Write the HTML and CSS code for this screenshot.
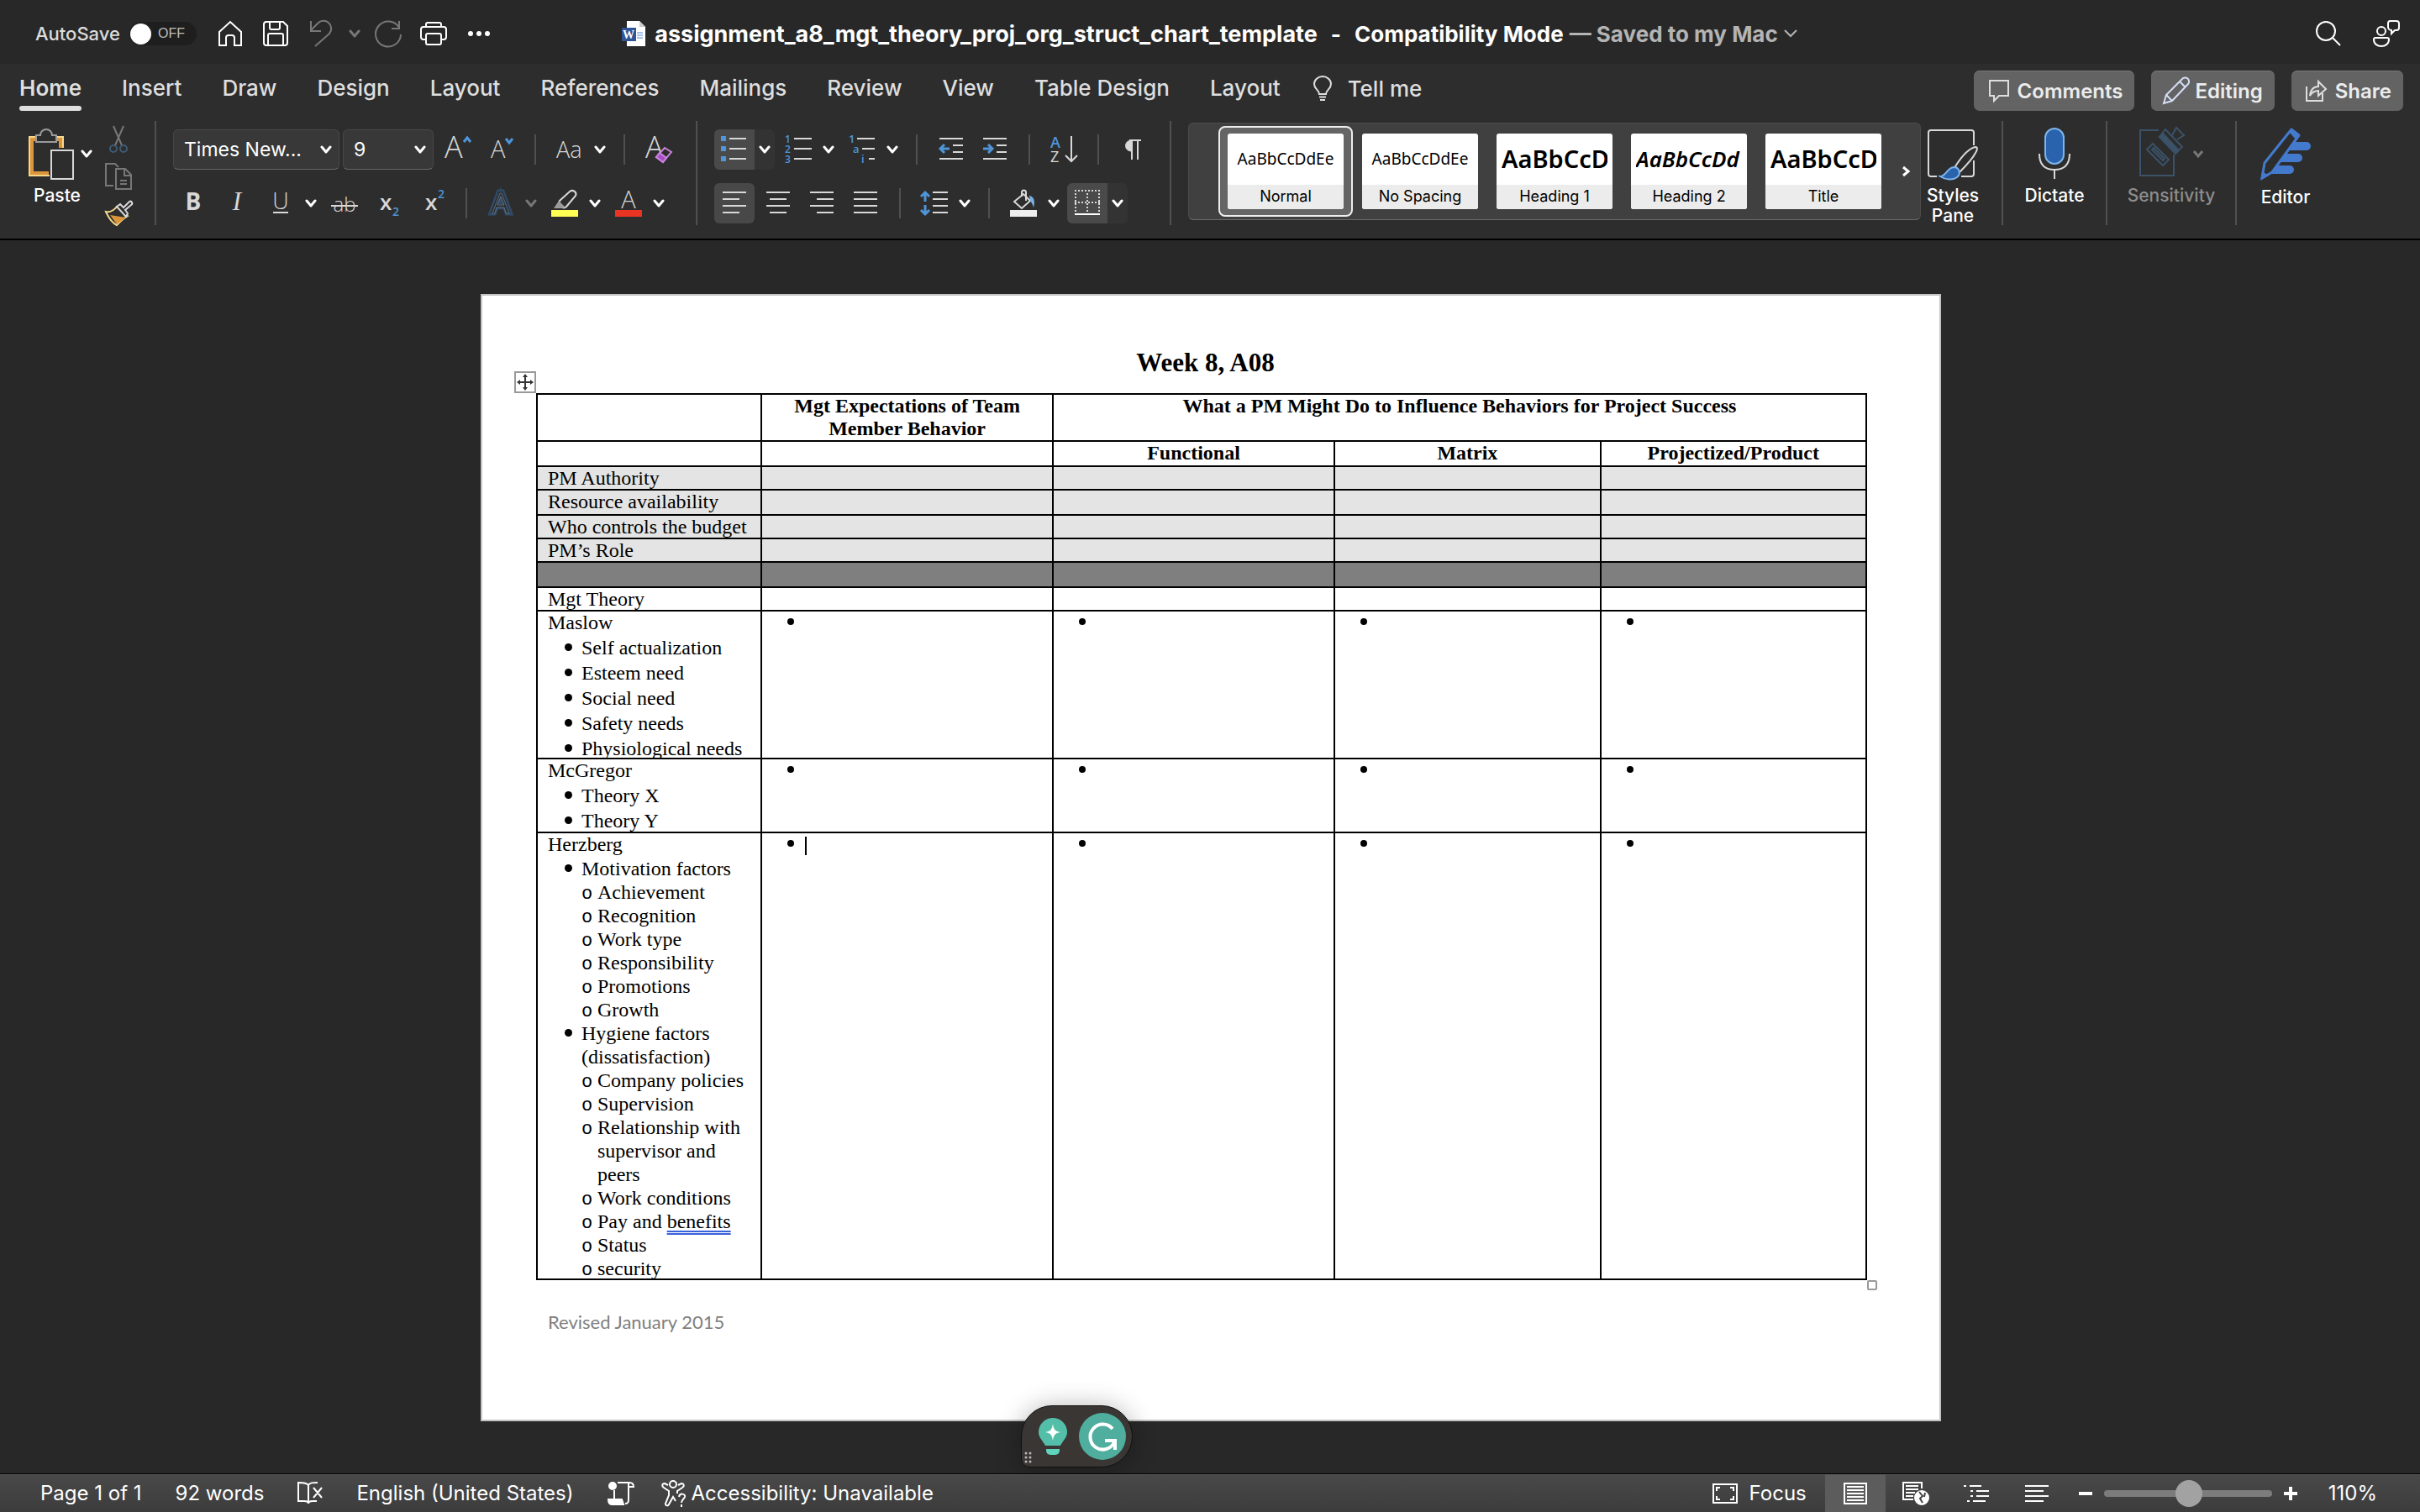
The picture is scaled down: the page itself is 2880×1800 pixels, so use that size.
FILE: index.html
```html
<!DOCTYPE html>
<html lang="en">
<head>
<meta charset="utf-8">
<meta name="viewport" content="width=device-width, initial-scale=1">
<title>assignment_a8_mgt_theory_proj_org_struct_chart_template</title>
<link rel="stylesheet" href="styles.css">
</head>
<body>
<svg class="sprite" aria-hidden="true">
  <symbol id="chev" viewBox="0 0 14 10"><path d="M2 2l5 6 5-6" fill="none" stroke="currentColor" stroke-width="3" stroke-linecap="round" stroke-linejoin="round"/></symbol>
</svg>

<header class="titlebar">
  <div class="quick">
    <label class="autosave" for="autosave">AutoSave</label>
    <input class="toggle" type="checkbox" id="autosave">
    <button class="quick-btn" aria-label="Home"><svg width="28" height="30" viewBox="0 0 28 30"><path d="M1 13L14 1l13 12v16h-8V20a3 3 0 0 0-3-3h-4a3 3 0 0 0-3 3v9H1z"/></svg></button>
    <button class="quick-btn" aria-label="Save"><svg width="30" height="30" viewBox="0 0 30 30"><path d="M4 1h20l5 5v20a3 3 0 0 1-3 3H4a3 3 0 0 1-3-3V4a3 3 0 0 1 3-3zM8 1v7a2 2 0 0 0 2 2h8a2 2 0 0 0 2-2V1M6 29V17a2 2 0 0 1 2-2h14a2 2 0 0 1 2 2v12"/></svg></button>
    <button class="quick-btn dim" aria-label="Undo"><svg width="28" height="32" viewBox="0 0 28 32"><path d="M2 1v12h12M2 12l8-8a9 9 0 0 1 14 12L7 31"/></svg></button>
    <button class="quick-chev dim" aria-label="Undo history"><svg width="14" height="10"><use href="#chev"/></svg></button>
    <button class="quick-btn dim" aria-label="Redo"><svg width="32" height="32" viewBox="0 0 32 32"><path d="M29 1v9h-9M29 9a15 15 0 1 0 2 8"/></svg></button>
    <button class="quick-btn" aria-label="Print"><svg width="32" height="28" viewBox="0 0 32 28"><path d="M7 6V3a2 2 0 0 1 2-2h14a2 2 0 0 1 2 2v3M7 21H4a3 3 0 0 1-3-3V9a3 3 0 0 1 3-3h24a3 3 0 0 1 3 3v9a3 3 0 0 1-3 3h-3M9 14h14a2 2 0 0 1 2 2v9a2 2 0 0 1-2 2H9a2 2 0 0 1-2-2v-9a2 2 0 0 1 2-2z"/></svg></button>
    <button class="quick-btn" aria-label="More"><svg width="26" height="6" viewBox="0 0 26 6"><g class="solid"><circle cx="3" cy="3" r="3"/><circle cx="13" cy="3" r="3"/><circle cx="23" cy="3" r="3"/></g></svg></button>
  </div>
  <div class="doc-title">
    <svg width="28" height="30" viewBox="0 0 28 30" aria-hidden="true"><path d="M6 0h15l7 7v23H6z" fill="#fff"/><path d="M21 0v7h7z" fill="#ccc"/><path d="M18 14h7M18 17h7M18 20h7" stroke="#4a86d8" stroke-width="1"/><rect y="8" width="17" height="16" fill="#2f5597"/><text x="8" y="21" font-family="Liberation Serif, serif" font-size="14" font-weight="700" text-anchor="middle" fill="#fff">W</text></svg>
    <span class="file">assignment_a8_mgt_theory_proj_org_struct_chart_template</span>
    <span class="sep">-</span>
    <span>Compatibility Mode</span>
    <button class="saved">— Saved to my Mac<svg width="18" height="10" viewBox="0 0 18 10"><path d="M2 1l7 7 7-7" fill="none" stroke="currentColor" stroke-width="2"/></svg></button>
  </div>
  <div class="title-tools">
    <button class="quick-btn" aria-label="Search"><svg width="30" height="30" viewBox="0 0 30 30"><circle cx="12" cy="12" r="11"/><path d="M20 20l9 9"/></svg></button>
    <button class="quick-btn" aria-label="Share with people"><svg width="32" height="32" viewBox="0 0 32 32"><circle cx="10" cy="13" r="5"/><path d="M3 21h14a2 2 0 0 1 2 2c0 5-4 8-9 8s-9-3-9-8a2 2 0 0 1 2-2zM20 1h8a3 3 0 0 1 3 3v5a3 3 0 0 1-3 3h-2l-4 4v-4a4 4 0 0 1-4-4V4a3 3 0 0 1 2-3z"/></svg></button>
  </div>
</header>

<div class="ribbon">
  <div class="tabrow">
    <nav class="tabs">
      <a class="tab active" href="#home">Home</a>
      <a class="tab" href="#insert">Insert</a>
      <a class="tab" href="#draw">Draw</a>
      <a class="tab" href="#design">Design</a>
      <a class="tab" href="#layout">Layout</a>
      <a class="tab" href="#references">References</a>
      <a class="tab" href="#mailings">Mailings</a>
      <a class="tab" href="#review">Review</a>
      <a class="tab" href="#view">View</a>
      <a class="tab" href="#table-design">Table Design</a>
      <a class="tab" href="#table-layout">Layout</a>
    </nav>
    <button class="tellme"><svg width="22" height="30" viewBox="0 0 22 30" fill="none" stroke="currentColor" stroke-width="2"><path d="M7 22c0-5-6-6-6-12a10 9 0 0 1 20 0c0 6-6 7-6 12zM7 25.500h8"/><path d="M8 29h6"/></svg>Tell me</button>
    <div class="actions">
      <button class="action"><svg width="32" height="32" viewBox="0 0 32 32"><path d="M5 4h22v18H16l-6 6v-6H5z"/></svg>Comments</button>
      <button class="action"><svg class="pencil" width="32" height="32" viewBox="0 0 32 32"><path d="M1 31l3-10L23 2a4 4 0 0 1 7 6L11 28zM20 5l7 7M4 21l7 7"/></svg>Editing</button>
      <button class="action"><svg width="32" height="32" viewBox="0 0 32 32"><path d="M4 11v17h19v-9M8 22c1-8 5-11 10-11V5l9 9-9 8v-6c-4 0-7 1-10 6z"/></svg>Share</button>
    </div>
  </div>

  <div class="groups">
    <div class="group clipboard">
      <div class="paste">
        <button class="paste-btn"><svg width="54" height="60" viewBox="0 0 54 60" fill="none"><path d="M25 55H1V9h40v13" stroke="#f6d88d" stroke-width="2"/><path d="M24 52H4V12h34v10" stroke="#db963c" stroke-width="4"/><path d="M9 15V7h5a7 7 0 0 1 14 0h5v8z" fill="#2d2d2d" stroke="#9b9b9b" stroke-width="2"/><path d="M27 25h26v34H27z" fill="#2d2d2d" stroke="#d8d8d8" stroke-width="2"/></svg>Paste</button>
        <button class="paste-chev" aria-label="Paste options"><svg width="14" height="10"><use href="#chev"/></svg></button>
      </div>
      <div class="clip-tools">
        <button aria-label="Cut"><svg width="32" height="32" viewBox="0 0 32 32" fill="none" stroke-width="2"><path d="M10 0l10 23M22 0L12 23" stroke="#777"/><circle cx="10" cy="27" r="4" stroke="#3f5a73"/><circle cx="22" cy="27" r="4" stroke="#3f5a73"/></svg></button>
        <button aria-label="Copy"><svg width="32" height="32" viewBox="0 0 32 32" fill="none" stroke="#777" stroke-width="2"><path d="M10 27H1V1h11l4 4M13 7h11l7 7v17H13zM23 7v8h8M18 21h8M18 25h8"/></svg></button>
        <button aria-label="Format Painter"><svg width="32" height="32" viewBox="0 0 32 32" fill="none" stroke-width="2"><path d="M1 14c6 1 10-2 13-6l13 11c-5 3-9 7-13 11C8 27 4 21 1 14z" stroke="#f6d88d"/><path d="M6 18l19 3-11 8z" fill="#db963c"/><path d="M14 8l4-3 4 4 7-7a2 2 0 0 1 2 4l-7 6 3 4-2 4z" fill="#2d2d2d" stroke="#d8d8d8"/></svg></button>
      </div>
    </div>

    <div class="group rows">
      <div class="row">
        <label class="combo font"><select aria-label="Font"><option>Times New...</option></select><svg width="14" height="10"><use href="#chev"/></svg></label>
        <label class="combo size"><select aria-label="Font size"><option>9</option></select><svg width="14" height="10"><use href="#chev"/></svg></label>
        <button class="ib" aria-label="Grow font"><svg viewBox="0 0 32 32"><text class="lt" x="1" y="26" font-size="36">A</text><path class="b" d="M24 7l4-5 4 5"/></svg></button>
        <button class="ib" aria-label="Shrink font"><svg viewBox="0 0 32 32"><text class="lt" x="4" y="26" font-size="29">A</text><path class="b" d="M22 3l4 5 4-5"/></svg></button>
        <span class="div"></span>
        <button class="ib" aria-label="Change case"><svg viewBox="0 0 32 32"><text class="lt" x="0" y="26" font-size="27">Aa</text></svg></button>
        <button class="ic" aria-label="Case options"><svg width="14" height="10"><use href="#chev"/></svg></button>
        <span class="div"></span>
        <button class="ib" aria-label="Clear formatting"><svg viewBox="0 0 32 32"><text class="lt" x="0" y="26" font-size="36">A</text><path d="M13 25L23 14l8 5-10 12z" fill="#2d2d2d" stroke="#c884dc" stroke-width="2"/><path d="M13 25l4-5 8 6-4 5z" fill="#a54fc0" stroke="#c884dc" stroke-width="2"/></svg></button>
      </div>
      <div class="row">
        <button class="ib" aria-label="Bold"><svg viewBox="0 0 32 32"><text class="bd" x="16" y="24" font-size="28" text-anchor="middle">B</text></svg></button>
        <button class="ib" aria-label="Italic"><svg viewBox="0 0 32 32"><text class="it" x="16" y="24" font-size="31" text-anchor="middle">I</text></svg></button>
        <button class="ib" aria-label="Underline"><svg viewBox="0 0 32 32"><text class="lt" x="16" y="23" font-size="27" text-anchor="middle">U</text><path class="l" d="M7 27h18"/></svg></button>
        <button class="ic" aria-label="Underline options"><svg width="14" height="10"><use href="#chev"/></svg></button>
        <button class="ib" aria-label="Strikethrough"><svg viewBox="0 0 32 32"><text class="lt" x="16" y="26" font-size="24" text-anchor="middle">ab</text><path class="l" d="M0 19h32"/></svg></button>
        <button class="ib" aria-label="Subscript"><svg viewBox="0 0 32 32"><text class="sb" x="6" y="24" font-size="26">x</text><text class="bl" x="21" y="31" font-size="14">2</text></svg></button>
        <button class="ib" aria-label="Superscript"><svg viewBox="0 0 32 32"><text class="sb" x="8" y="24" font-size="26">x</text><text class="bl" x="23" y="10" font-size="14">2</text></svg></button>
        <span class="div"></span>
        <button class="ib" aria-label="Text effects"><svg viewBox="0 0 32 32"><text x="16" y="28" font-size="36" text-anchor="middle" font-family="Open Sans, sans-serif" font-weight="600" fill="#2d2d2d" stroke="#2f4b68" stroke-width="5" paint-order="stroke">A</text><path d="M6 28L15 4h2l9 24h-4l-2-7h-9l-2 7zM12 18h8l-4-10z" fill="none" stroke="#5b7186" stroke-width="1"/></svg></button>
        <button class="ic dim" aria-label="Text effect options"><svg width="14" height="10"><use href="#chev"/></svg></button>
        <button class="ib" aria-label="Highlight"><svg viewBox="0 0 32 32"><path d="M10 13L22 2c4-3 9 1 7 5L18 20c-2 2-4 2-6 0s-4-4-2-7z" fill="none" stroke="#d8d8d8" stroke-width="2"/><path d="M9 13l8 8-5 1H3z" fill="#9b9b9b"/><path d="M0 24h32v8H0z" fill="#ffff54"/></svg></button>
        <button class="ic" aria-label="Highlight options"><svg width="14" height="10"><use href="#chev"/></svg></button>
        <button class="ib" aria-label="Font colour"><svg viewBox="0 0 32 32"><text class="lt" x="16" y="22" font-size="29" text-anchor="middle">A</text><path d="M0 24h32v8H0z" fill="#e93423"/></svg></button>
        <button class="ic" aria-label="Font colour options"><svg width="14" height="10"><use href="#chev"/></svg></button>
      </div>
    </div>

    <div class="group rows">
      <div class="row">
        <div class="split">
          <button class="ib" aria-label="Bullets"><svg viewBox="0 0 32 32"><path class="l" d="M10 3h20M10 15h20M10 27h20"/><path d="M0 0h6v6H0zM0 12h6v6H0zM0 24h6v6H0z" fill="#4e95d9"/></svg></button><button class="ic" aria-label="Bullet options"><svg width="14" height="10"><use href="#chev"/></svg></button>
        </div>
        <div class="plain">
          <button class="ib" aria-label="Numbering"><svg viewBox="0 0 32 32"><path class="l" d="M11 3h21M11 15h21M11 27h21"/><g class="bl" font-size="12"><text x="0" y="8">1</text><text x="0" y="20">2</text><text x="0" y="32">3</text></g></svg></button><button class="ic" aria-label="Numbering options"><svg width="14" height="10"><use href="#chev"/></svg></button>
        </div>
        <div class="plain">
          <button class="ib" aria-label="Multilevel list"><svg viewBox="0 0 32 32"><path class="l" d="M10 3h21M16 15h15M24 27h7"/><g class="bl" font-size="13"><text x="0" y="8">1</text><text x="5" y="20">a</text><text x="15" y="32">i</text></g></svg></button><button class="ic" aria-label="Multilevel options"><svg width="14" height="10"><use href="#chev"/></svg></button>
        </div>
        <span class="div"></span>
        <button class="ib" aria-label="Decrease indent"><svg viewBox="0 0 32 32"><path class="l" d="M2 3h28M18 11h12M18 19h12M2 27h28"/><path class="b" d="M14 15H3m5-5l-5 5 5 5"/></svg></button>
        <button class="ib" aria-label="Increase indent"><svg viewBox="0 0 32 32"><path class="l" d="M2 3h28M18 11h12M18 19h12M2 27h28"/><path class="b" d="M2 15h11m-5-5l5 5-5 5"/></svg></button>
        <span class="div"></span>
        <button class="ib" aria-label="Sort"><svg viewBox="0 0 32 32"><text class="bl" x="0" y="14" font-size="18">A</text><text class="md" x="0" y="31" font-size="18">Z</text><path class="l" d="M25 0v30m-7-7l7 7 7-7"/></svg></button>
        <span class="div"></span>
        <button class="ib" aria-label="Show paragraph marks"><svg viewBox="0 0 32 32"><path d="M14 5v13a6 6 0 0 1 0-13z" fill="#d8d8d8" stroke="#d8d8d8"/><path class="l" d="M12 5h14M15 5v23M22 5v23"/></svg></button>
      </div>
      <div class="row">
        <button class="ib on" aria-label="Align left"><svg viewBox="0 0 32 32"><path class="l" d="M2 3h28M2 11h20M2 19h28M2 27h20"/></svg></button>
        <button class="ib" aria-label="Center"><svg viewBox="0 0 32 32"><path class="l" d="M2 3h28M6 11h20M2 19h28M6 27h20"/></svg></button>
        <button class="ib" aria-label="Align right"><svg viewBox="0 0 32 32"><path class="l" d="M2 3h28M10 11h20M2 19h28M10 27h20"/></svg></button>
        <button class="ib" aria-label="Justify"><svg viewBox="0 0 32 32"><path class="l" d="M2 3h28M2 11h28M2 19h28M2 27h28"/></svg></button>
        <span class="div"></span>
        <div class="plain">
          <button class="ib" aria-label="Line spacing"><svg viewBox="0 0 32 32"><path class="l" d="M14 3h18M14 11h18M14 19h18M14 27h18"/><path class="b" d="M5 14V3M0 8l5-5 5 5M5 18v11M0 24l5 5 5-5"/></svg></button><button class="ic" aria-label="Line spacing options"><svg width="14" height="10"><use href="#chev"/></svg></button>
        </div>
        <span class="div"></span>
        <div class="plain">
          <button class="ib" aria-label="Shading"><svg viewBox="0 0 32 32"><path class="l" d="M5 14L16 5l8 8-10 9zM14 8V3a2 2 0 0 1 5 0v10"/><path d="M23 7c6 1 7 7 5 14-1-3-2-6-4-8z" fill="#79b0e6"/><path d="M0 24h32v8H0z" fill="#eee"/></svg></button><button class="ic" aria-label="Shading options"><svg width="14" height="10"><use href="#chev"/></svg></button>
        </div>
        <div class="split">
          <button class="ib" aria-label="Borders"><svg viewBox="0 0 32 32"><path d="M1 1h30M1 15h30M2 4v22M16 4v22M30 4v22" fill="none" stroke="#d8d8d8" stroke-width="2" stroke-dasharray="2 2"/><path d="M1 29h30" stroke="#fff" stroke-width="2"/></svg></button><button class="ic" aria-label="Border options"><svg width="14" height="10"><use href="#chev"/></svg></button>
        </div>
      </div>
    </div>

    <div class="group styles-group">
      <div class="gallery">
        <button class="tile selected"><span class="card"><span class="sample">AaBbCcDdEe</span><span class="name">Normal</span></span></button>
        <button class="tile"><span class="card"><span class="sample">AaBbCcDdEe</span><span class="name">No Spacing</span></span></button>
        <button class="tile"><span class="card"><span class="sample big">AaBbCcD</span><span class="name">Heading 1</span></span></button>
        <button class="tile"><span class="card"><span class="sample big slant">AaBbCcDd</span><span class="name">Heading 2</span></span></button>
        <button class="tile"><span class="card"><span class="sample big">AaBbCcD</span><span class="name">Title</span></span></button>
        <button class="gallery-next" aria-label="More styles"><svg width="10" height="14" viewBox="0 0 10 14"><path d="M2 2l6 5-6 5" fill="none" stroke="currentColor" stroke-width="3"/></svg></button>
      </div>
      <button class="large pane"><svg width="60" height="60" viewBox="0 0 60 60" fill="none" stroke-width="2"><path d="M11 56H4a3 3 0 0 1-3-3V4a3 3 0 0 1 3-3h48a3 3 0 0 1 3 3v15M55 37v16a3 3 0 0 1-3 3H40" stroke="#d8d8d8"/><path d="M33 44C42 30 51 22 57 21c3 0 2 4 0 7-4 8-11 15-19 23z" stroke="#d8d8d8"/><path d="M15 56c7 0 8-10 16-11 7 0 9 8 4 12-5 4-14 3-20-1z" fill="#2a63ad" stroke="#7db4ea"/></svg>Styles Pane</button>
    </div>

    <div class="group">
      <button class="large dictate"><svg width="60" height="60" viewBox="0 0 60 60" fill="none" stroke-width="2"><rect x="19" y="-1" width="22" height="42" rx="11" fill="#2a63ad" stroke="#7db4ea"/><path d="M12 29c0 13 6 19 18 19s18-6 18-19M30 48v11" stroke="#d8d8d8"/></svg>Dictate</button>
    </div>
    <div class="group">
      <button class="large sensitivity"><svg width="76" height="60" viewBox="0 0 76 60" fill="none" stroke="#3b5268" stroke-width="2"><path d="M23 1H1v54h40V30"/><path d="M9 24l7-7 19 19-7 7zM15 24l13 13 2-2-13-13z"/><path d="M24 9l7-9 20 21-8 7z"/><path d="M24 9l4-4 19 20-4 4z" fill="#3b5268"/><path d="M39 7l5-9 9 9-8 5"/><path d="M65 26l5 6 5-6" stroke="#777" stroke-width="3"/></svg>Sensitivity</button>
    </div>
    <div class="group last">
      <button class="large editor"><svg width="62" height="62" viewBox="0 0 62 62"><path d="M36 15h20a5 5 0 0 1 0 10H30zM28 29h18a5 5 0 0 1 0 10H22zM19 43h17a5 5 0 0 1 0 10H14z" fill="#447ace"/><path d="M38 0l9 7-32 44-12 7 3-18z" fill="#2d2d2d" stroke="#447ace" stroke-width="3" stroke-linejoin="round"/><path d="M36 4l2-5 10 8-4 6z" fill="#447ace"/><path d="M1 61l2-11 8 5z" fill="#447ace"/></svg>Editor</button>
    </div>
  </div>
</div>

<main class="workspace">
  <article class="page">
    <h1>Week 8, A08</h1>
    <div class="table-wrap">
      <button class="move-handle" aria-label="Move table"><svg width="20" height="20" viewBox="0 0 20 20"><path d="M10 2v16M2 10h16" stroke="#333" stroke-width="2"/><path d="M10 0l3 4H7zM10 20l3-4H7zM0 10l4-3v6zM20 10l-4-3v6z" fill="#333"/></svg></button>
      <table>
        <colgroup><col class="c1"><col class="c2"><col class="c3"><col class="c4"><col class="c4"></colgroup>
        <thead>
          <tr><th></th><th>Mgt Expectations of Team Member Behavior</th><th colspan="3">What a PM Might Do to Influence Behaviors for Project Success</th></tr>
          <tr class="tall"><th></th><th></th><th>Functional</th><th>Matrix</th><th>Projectized/Product</th></tr>
        </thead>
        <tbody>
          <tr class="shade"><td>PM Authority</td><td></td><td></td><td></td><td></td></tr>
          <tr class="shade tall"><td>Resource availability</td><td></td><td></td><td></td><td></td></tr>
          <tr class="shade"><td>Who controls the budget</td><td></td><td></td><td></td><td></td></tr>
          <tr class="shade"><td>PM’s Role</td><td></td><td></td><td></td><td></td></tr>
          <tr class="band tall"><td></td><td></td><td></td><td></td><td></td></tr>
          <tr><td>Mgt Theory</td><td></td><td></td><td></td><td></td></tr>
          <tr>
            <td>Maslow
              <ul class="points roomy snug"><li>Self actualization</li><li>Esteem need</li><li>Social need</li><li>Safety needs</li><li>Physiological needs</li></ul></td>
            <td><ul class="entry"><li></li></ul></td><td><ul class="entry"><li></li></ul></td><td><ul class="entry"><li></li></ul></td><td><ul class="entry"><li></li></ul></td>
          </tr>
          <tr>
            <td>McGregor
              <ul class="points roomy"><li>Theory X</li><li>Theory Y</li></ul></td>
            <td><ul class="entry"><li></li></ul></td><td><ul class="entry"><li></li></ul></td><td><ul class="entry"><li></li></ul></td><td><ul class="entry"><li></li></ul></td>
          </tr>
          <tr>
            <td>Herzberg
              <ul class="points">
                <li>Motivation factors
                  <ul class="sub"><li>Achievement</li><li>Recognition</li><li>Work type</li><li>Responsibility</li><li>Promotions</li><li>Growth</li></ul></li>
                <li>Hygiene factors (dissatisfaction)
                  <ul class="sub"><li>Company policies</li><li>Supervision</li><li>Relationship with supervisor and peers</li><li>Work conditions</li><li>Pay and <span class="flag">benefits</span></li><li>Status</li><li>security</li></ul></li>
              </ul></td>
            <td><ul class="entry"><li><span class="caret"></span></li></ul></td><td><ul class="entry"><li></li></ul></td><td><ul class="entry"><li></li></ul></td><td><ul class="entry"><li></li></ul></td>
          </tr>
        </tbody>
      </table>
      <span class="resize-handle"></span>
    </div>
    <footer class="page-footer">Revised January 2015</footer>
  </article>
</main>

<aside class="assistant">
  <svg class="grip" width="10" height="14" viewBox="0 0 10 14" fill="#bbb"><circle cx="2" cy="2" r="1.500"/><circle cx="7" cy="2" r="1.500"/><circle cx="2" cy="7" r="1.500"/><circle cx="7" cy="7" r="1.500"/><circle cx="2" cy="12" r="1.500"/><circle cx="7" cy="12" r="1.500"/></svg>
  <button aria-label="Suggestions"><svg width="34" height="44" viewBox="0 0 34 44"><path d="M17 0a17 17 0 0 1 17 17c0 7-6 11-8 16H8C6 28 0 24 0 17A17 17 0 0 1 17 0z" fill="#54bfa9"/><path d="M9 37h16v2a5 5 0 0 1-5 5h-6a5 5 0 0 1-5-5z" fill="#5fd3bc"/><path d="M17 7c1 7 3 9 9 10-6 1-8 3-9 10-1-7-3-9-9-10 6-1 8-3 9-10z" fill="#fff"/></svg></button>
  <button aria-label="Writing assistant"><svg width="56" height="56" viewBox="0 0 56 56"><circle cx="28" cy="28" r="28" fill="#50ae9f"/><path d="M40 19a15 15 0 1 0 2 16M31 33h12v11" fill="none" stroke="#fff" stroke-width="4"/></svg></button>
</aside>

<footer class="status">
  <div class="status-left">
    <span>Page 1 of 1</span>
    <span>92 words</span>
    <button aria-label="Proofing"><svg width="30" height="28" viewBox="0 0 30 28"><path d="M13 4c-2-3-7-3-12-3v22h7c3 0 5 1 5 3 0-2 2-3 5-3h5M13 4v22M13 4c2-3 5-3 11-3M19 7l10 12M29 7L19 19"/></svg></button>
    <button>English (United States)</button>
    <div class="status-pair">
      <button aria-label="Track changes"><svg width="32" height="28" viewBox="0 0 32 28"><path d="M12 1h14c4 0 5 2 5 5h-5M25 2v19c0 4-1 5-4 5M8 10v12"/><g class="solid"><circle cx="6" cy="5" r="4"/><path d="M1 21h16l2 6H5c-3 0-4-3-4-6z"/></g></svg></button>
      <button class="access"><svg width="30" height="32" viewBox="0 0 30 32"><circle cx="14" cy="5" r="4"/><path d="M8 6L4 4C1 4 0 7 3 9l6 4v5L5 28c0 3 3 3 4 1l5-9 3 5M20 6l4-2c3 0 4 3 1 5l-6 4v3M21 20c1-5 8-4 7 0-1 3-4 3-4 7M24 29v3"/></svg>Accessibility: Unavailable</button>
    </div>
  </div>
  <div class="status-right">
    <button class="focus"><svg width="30" height="24" viewBox="0 0 30 24"><path d="M1 1h28v22H1zM5 9V5h4M21 5h4v4M25 15v4h-4M9 19H5v-4"/></svg>Focus</button>
    <button class="view active" aria-label="Print layout"><svg width="28" height="26" viewBox="0 0 28 26"><path d="M1 1h26v24H1zM4 5h20M4 9h20M4 13h20M4 17h20M4 21h20"/></svg></button>
    <button class="view" aria-label="Web layout"><svg width="32" height="28" viewBox="0 0 32 28"><path d="M13 21H1V1h22v7M4 5h15M4 9h15M4 13h11M4 17h9"/><g class="solid"><circle cx="23" cy="19" r="8"/></g><path d="M20 12l4 5-3 3 3 5M27 13l-1 5" class="land"/></svg></button>
    <button class="view" aria-label="Outline"><svg width="32" height="24" viewBox="0 0 32 24"><path d="M1 3h3M8 3h14M9 9h3M16 9h15M9 15h3M16 15h15M5 21h3M12 21h15"/></svg></button>
    <button class="view" aria-label="Draft"><svg width="28" height="24" viewBox="0 0 28 24"><path d="M0 3h28M0 9h22M0 15h28M0 21h22"/></svg></button>
    <div class="zoom">
      <button aria-label="Zoom out"><svg width="16" height="16" viewBox="0 0 16 16"><path d="M0 8h16"/></svg></button>
      <input type="range" min="0" max="100" value="51" aria-label="Zoom">
      <button aria-label="Zoom in"><svg width="16" height="16" viewBox="0 0 16 16"><path d="M0 8h16M8 0v16"/></svg></button>
    </div>
    <span class="percent">110%</span>
  </div>
</footer>
</body>
</html>
```
FILE: styles.css
```css
* { box-sizing: border-box; }

body {
  margin: 0;
  min-height: 100vh;
  display: flex;
  flex-direction: column;
  background: #282828;
  color: #fff;
  font-family: Inter, "Liberation Sans", sans-serif;
  font-size: 24px;
}

button {
  margin: 0;
  padding: 0;
  border: 0;
  background: none;
  color: inherit;
  font: inherit;
  cursor: pointer;
}

svg { display: block; flex: none; overflow: visible; }
.sprite { position: absolute; width: 0; height: 0; }
.dim { color: #777; }

/* Title bar */
.titlebar {
  display: grid;
  grid-template-columns: 1fr auto 1fr;
  align-items: center;
  height: 76px;
  padding-top: 4px;
}
.quick, .title-tools { display: flex; align-items: center; }
.quick { padding-left: 42px; }
.autosave { width: 112px; color: #dcdcdc; font-size: 22px; font-weight: 500; }
.toggle {
  appearance: none;
  display: flex;
  align-items: center;
  gap: 8px;
  width: 80px;
  height: 28px;
  margin: 0 13px 0 0;
  padding-left: 1px;
  border-radius: 14px;
  background: #1e1e1e;
  color: #bdbdbd;
  font-size: 16px;
  font-weight: 500;
}
.toggle::before { content: ""; width: 25px; height: 25px; border-radius: 50%; background: #fff; }
.toggle::after { content: "OFF"; }
.quick-btn {
  display: flex;
  justify-content: center;
  align-items: center;
  width: 54px;
  height: 40px;
}
.quick-btn path, .quick-btn circle { fill: none; stroke: currentColor; stroke-width: 2; }
.quick-btn .solid circle { fill: currentColor; stroke: none; }
.quick-chev { display: flex; justify-content: center; width: 26px; }
.doc-title {
  display: flex;
  align-items: center;
  font-size: 26px;
  font-weight: 700;
  white-space: nowrap;
}
.file { margin-left: 11px; font-size: 27px; }
.sep { margin: 0 16px; }
.saved {
  display: flex;
  align-items: center;
  gap: 6px;
  margin-left: 7px;
  color: #b4b4b4;
  font-weight: 700;
}
.title-tools { justify-content: flex-end; gap: 15px; padding-right: 13px; }

/* Ribbon */
.ribbon { height: 210px; border-bottom: 2px solid #000; background: #2d2d2d; }
.tabrow { display: flex; height: 68px; padding: 8px 20px 0 23px; align-items: flex-start; }
.tabs { display: flex; gap: 48px; }
.tab {
  color: #dedede;
  font-size: 26px;
  font-weight: 500;
  line-height: 42px;
  text-decoration: none;
}
.tab.active { font-weight: 600; }
.tab.active::after { content: ""; display: block; height: 6px; border-radius: 3px; background: #dedede; }
.tellme {
  display: flex;
  align-items: center;
  gap: 19px;
  height: 42px;
  margin-left: 39px;
  color: #dedede;
  font-size: 26px;
  font-weight: 500;
}
.actions { display: flex; gap: 20px; margin-left: auto; }
.action {
  display: flex;
  align-items: center;
  gap: 6px;
  height: 48px;
  padding: 0 14px;
  border-radius: 7px;
  background: #636363;
  box-shadow: inset 0 1px 0 #777;
  color: #ececec;
  font-size: 24px;
  font-weight: 600;
}
.action path { fill: none; stroke: #dedede; stroke-width: 2; }
.action .pencil path { stroke: #d6def5; }

.groups { display: flex; height: 124px; padding: 0 102px 0 30px; }
.group { display: flex; padding-right: 20px; margin-right: 20px; border-right: 2px solid #505050; }
.group.last { margin-right: 0; padding-right: 20px; border-right: 0; }
.clipboard { gap: 2px; padding-top: 10px; }
.paste { display: flex; width: 86px; }
.paste-btn {
  display: flex;
  flex-direction: column;
  align-items: center;
  gap: 7px;
  width: 76px;
  font-size: 21px;
  font-weight: 500;
  line-height: 24px;
}
.paste-btn svg { margin-right: 14px; }
.paste-chev { display: flex; align-self: flex-start; margin: 24px 0 0 -10px; }
.clip-tools { display: flex; flex-direction: column; gap: 12px; margin-top: -4px; }
.clip-tools button { width: 46px; height: 32px; display: flex; justify-content: center; }

.rows { flex-direction: column; gap: 16px; padding-top: 10px; }
.row { display: flex; gap: 4px; height: 48px; }
.ib, .ic { display: flex; align-items: center; justify-content: center; height: 48px; }
.ib { width: 48px; border-radius: 6px; }
.ib svg { width: 32px; height: 32px; }
.ib.on { background: #484848; }
.ic { width: 24px; }
.row > .ic { margin-left: -4px; }
.plain, .split { display: flex; }
.split .ib { border-radius: 6px 0 0 6px; background: #4a4a4a; }
.split .ic { border-radius: 0 6px 6px 0; background: #333; }
.div { width: 2px; height: 36px; margin: 6px 12px; background: #505050; }
.l { fill: none; stroke: #d8d8d8; stroke-width: 2; }
.b { fill: none; stroke: #4e95d9; stroke-width: 3; }
.lt, .md, .sb, .bd, .bl { font-family: "Open Sans", "Noto Sans", sans-serif; fill: #d8d8d8; }
.lt { font-weight: 300; }
.sb { font-weight: 600; }
.bd { font-weight: 700; }
.bl { font-weight: 600; fill: #4e95d9; }
.it { font-family: "Liberation Serif", serif; font-style: italic; fill: #d8d8d8; }

.combo {
  position: relative;
  display: flex;
  align-items: center;
  height: 48px;
  border: 1px solid #484848;
  border-bottom-color: #666;
  border-radius: 6px;
  background: #383838;
}
.combo select {
  appearance: none;
  width: 100%;
  height: 100%;
  padding: 0 12px;
  border: 0;
  background: none;
  color: #fff;
  font: 23px Inter, "Liberation Sans", sans-serif;
}
.combo svg { position: absolute; right: 8px; pointer-events: none; }
.font { width: 198px; }
.size { width: 108px; }

.styles-group { flex: 1; min-width: 0; }
.gallery {
  display: flex;
  flex: 1;
  min-width: 0;
  height: 116px;
  margin-top: 2px;
  padding: 3px 0 3px 35px;
  overflow: hidden;
  border: 1px solid #4c4c4c;
  border-bottom-color: #6a6a6a;
  border-radius: 6px;
  background: #404040;
}
.tile {
  width: 160px;
  height: 108px;
  flex: none;
  padding: 7px 9px;
  border: 2px solid transparent;
  border-radius: 8px;
}
.tile.selected { border-color: #eee; background: #656565; }
.card {
  display: flex;
  flex-direction: column;
  height: 90px;
  overflow: hidden;
  border-radius: 3px;
  background: #fff;
  color: #000;
}
.sample {
  height: 61px;
  margin: 0 6px;
  overflow: hidden;
  font-family: "Noto Sans", sans-serif;
  font-size: 19px;
  line-height: 60px;
  text-align: center;
}
.big { font-size: 29px; font-weight: 600; text-align: left; }
.slant { font-size: 26px; font-style: italic; }
.name { height: 29px; background: #ececec; font-size: 18px; line-height: 28px; text-align: center; }
.gallery-next { display: flex; flex: 1; justify-content: center; align-items: center; }

.large {
  display: flex;
  flex-direction: column;
  align-items: center;
  gap: 7px;
  padding-top: 10px;
  font-size: 21px;
  font-weight: 500;
  line-height: 24px;
}
.pane { width: 76px; flex: none; }
.dictate { width: 82px; }
.sensitivity { width: 112px; color: #8c8c8c; }
.editor { width: 76px; }

/* Document */
.workspace { flex: 1; padding: 64px 0 62px 2px; }
.page {
  max-width: 1738px;
  aspect-ratio: 1738 / 1342;
  margin: 0 auto;
  padding: 62px 86px 0 64px;
  border: 2px solid #c4c4c4;
  background: #fff;
  color: #000;
  font-family: "Liberation Serif", serif;
}
.page h1 {
  margin: 0 5px 18px 14px;
  font-size: 31px;
  line-height: 36px;
  text-align: center;
}
.table-wrap { position: relative; }
table { width: 100%; border-collapse: collapse; table-layout: fixed; line-height: 26px; }
.c1 { width: 16.9%; }
.c2 { width: 21.9%; }
.c3 { width: 21.2%; }
.c4 { width: 20%; }
th, td { height: 28px; padding: 0 12px; border: 2px solid #000; vertical-align: top; text-align: left; }
th { line-height: 27px; text-align: center; }
.tall > * { height: 30px; }
.shade { background: #e4e4e4; }
.band { background: #7f7f7f; }
ul { margin: 0; padding: 0; list-style: none; }
.points { margin: 2px 0 -2px; line-height: 28px; }
.roomy { line-height: 30px; }
.snug { margin-bottom: -4px; }
.points li { position: relative; padding-left: 40px; }
.points li::before, .entry li::before {
  content: "";
  position: absolute;
  top: calc(.5lh - 5px);
  left: 20px;
  width: 9px;
  height: 9px;
  border-radius: 50%;
  background: #000;
}
.points .sub li { padding-left: 19px; }
.points .sub li::before {
  content: "o";
  top: 3px;
  left: 0;
  background: none;
  font-family: "Liberation Mono", monospace;
  font-size: 22px;
}
.entry li { position: relative; height: 26px; padding: 4px 0 0 39px; }
.entry li::before { left: 18px; width: 8px; height: 8px; }
.caret { display: block; width: 2px; height: 22px; background: #000; }
.flag { text-decoration: underline double #3a62d8 2px; text-underline-offset: 3px; text-decoration-skip-ink: none; }
.move-handle {
  position: absolute;
  left: -26px;
  top: -26px;
  display: grid;
  place-items: center;
  width: 26px;
  height: 26px;
  border: 2px solid #999;
  background: #fff;
}
.resize-handle {
  position: absolute;
  right: -12px;
  bottom: -12px;
  width: 12px;
  height: 12px;
  border: 2px solid #999;
  border-radius: 2px;
  background: #fff;
}
.page-footer {
  margin: 36px 14px 0;
  color: #7f7f7f;
  font-family: Lato, "Open Sans", sans-serif;
  font-size: 22px;
  line-height: 28px;
}

/* Floating writing assistant */
.assistant {
  position: fixed;
  left: calc(50% - 225px);
  bottom: 53px;
  display: flex;
  align-items: center;
  gap: 14px;
  width: 133px;
  height: 74px;
  padding: 0 9px 0 20px;
  border: 1px solid #111;
  border-radius: 37px 37px 37px 10px;
  background: #393634;
  box-shadow: 0 2px 30px rgba(0, 0, 0, .3);
}
.grip { position: absolute; left: 3px; bottom: 4px; }

/* Status bar */
.status {
  position: relative;
  display: flex;
  justify-content: space-between;
  height: 46px;
  border-top: 1px solid #000;
  background: linear-gradient(#494949, #3c3c3c);
  box-shadow: inset 0 1px 0 #555;
}
.status path, .status circle { fill: none; stroke: #fff; stroke-width: 2; }
.status .zoom path { stroke-width: 4; }
.status .land { stroke: #444; }
.status .solid circle, .status .solid path { fill: #fff; }
.status-left, .status-right, .status-pair, .access, .focus, .zoom { display: flex; align-items: center; }
.status-left { gap: 40px; padding-left: 48px; }
.status-pair { gap: 32px; }
.access { gap: 6px; }
.status-right { padding-right: 51px; }
.focus { gap: 14px; margin-right: 22px; }
.view { display: grid; place-items: center; width: 72px; height: 45px; }
.view.active { background: #5c5c5c; }
.zoom { gap: 14px; padding: 0 37px 0 14px; }
.zoom input { appearance: none; width: 200px; height: 8px; margin: 0; border-radius: 4px; background: #7c7c7c; }
.zoom input::-webkit-slider-thumb {
  appearance: none;
  width: 32px;
  height: 32px;
  border-radius: 50%;
  background: #a2a2a2;
}
```
